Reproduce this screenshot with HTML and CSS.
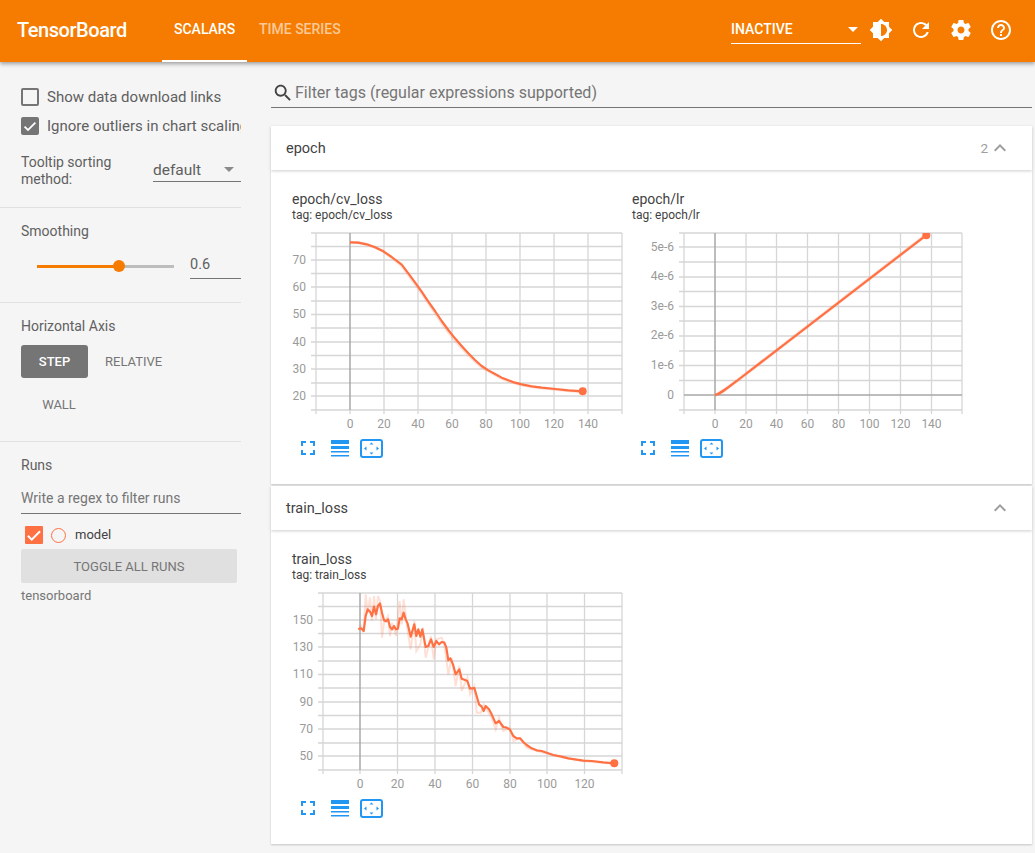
FILE: index.html
```html
<!DOCTYPE html>
<html lang="en">
<head>
<meta charset="utf-8">
<title>TensorBoard</title>
<link rel="stylesheet" href="styles.css">
</head>
<body>
<header class="topbar">
  <div class="brand">TensorBoard</div>
  <nav class="tabs">
    <a class="tab tab-active">SCALARS</a>
    <a class="tab">TIME SERIES</a>
  </nav>
  <div class="topbar-right">
    <div class="plugin-select"><span>INACTIVE</span><i class="caret caret-white"></i></div>
    <div class="top-icons">
      <svg class="top-icon" viewBox="0 0 24 24"><path d="M20 15.31L23.31 12 20 8.69V4h-4.69L12 .69 8.69 4H4v4.69L.69 12 4 15.31V20h4.69L12 23.31 15.31 20H20v-4.69zM12 18V6c3.31 0 6 2.69 6 6s-2.69 6-6 6z"/></svg>
      <svg class="top-icon" viewBox="0 0 24 24"><path d="M17.65 6.35C16.2 4.9 14.21 4 12 4c-4.42 0-7.99 3.58-7.99 8s3.57 8 7.99 8c3.73 0 6.84-2.55 7.73-6h-2.08c-.82 2.33-3.04 4-5.65 4-3.31 0-6-2.69-6-6s2.69-6 6-6c1.66 0 3.14.69 4.22 1.78L13 11h7V4l-2.35 2.35z"/></svg>
      <svg class="top-icon" viewBox="0 0 24 24"><path d="M19.43 12.98c.04-.32.07-.64.07-.98s-.03-.66-.07-.98l2.11-1.65c.19-.15.24-.42.12-.64l-2-3.46c-.12-.22-.39-.3-.61-.22l-2.49 1c-.52-.4-1.08-.73-1.69-.98l-.38-2.65C14.46 2.18 14.25 2 14 2h-4c-.25 0-.46.18-.49.42l-.38 2.65c-.61.25-1.17.59-1.69.98l-2.49-1c-.23-.09-.49 0-.61.22l-2 3.46c-.13.22-.07.49.12.64l2.11 1.65c-.04.32-.07.65-.07.98s.03.66.07.98l-2.11 1.65c-.19.15-.24.42-.12.64l2 3.46c.12.22.39.3.61.22l2.49-1c.52.4 1.08.73 1.69.98l.38 2.65c.03.24.24.42.49.42h4c.25 0 .46-.18.49-.42l.38-2.65c.61-.25 1.17-.59 1.69-.98l2.49 1c.23.09.49 0 .61-.22l2-3.46c.12-.22.07-.49-.12-.64l-2.11-1.65zM12 15.5c-1.93 0-3.5-1.57-3.5-3.5s1.57-3.5 3.5-3.5 3.5 1.57 3.5 3.5-1.57 3.5-3.5 3.5z"/></svg>
      <svg class="top-icon" viewBox="0 0 24 24"><path d="M11 18h2v-2h-2v2zm1-16C6.48 2 2 6.48 2 12s4.48 10 10 10 10-4.48 10-10S17.52 2 12 2zm0 18c-4.41 0-8-3.59-8-8s3.59-8 8-8 8 3.59 8 8-3.59 8-8 8zm0-14c-2.21 0-4 1.79-4 4h2c0-1.1.9-2 2-2s2 .9 2 2c0 2-3 1.75-3 5h2c0-2.25 3-2.5 3-5 0-2.21-1.79-4-4-4z"/></svg>
    </div>
  </div>
</header>

<div class="page">
  <aside class="sidebar">
    <section class="side-section section-options">
      <div class="check-row">
        <span class="checkbox"></span><span class="check-label">Show data download links</span>
      </div>
      <div class="check-row">
        <span class="checkbox checkbox-on"><svg viewBox="0 0 24 24"><path d="M9 16.2L4.8 12l-1.9 1.9L9 20 21 8l-1.9-1.9z"/></svg></span><span class="check-label">Ignore outliers in chart scaling</span>
      </div>
      <div class="tooltip-row">
        <div class="tooltip-label">Tooltip sorting method:</div>
        <div class="dropdown"><span>default</span><i class="caret caret-grey"></i></div>
      </div>
    </section>

    <section class="side-section section-smoothing">
      <div class="side-title">Smoothing</div>
      <div class="slider-row">
        <div class="slider"><div class="slider-fill"></div><div class="slider-thumb"></div></div>
        <div class="slider-value">0.6</div>
      </div>
    </section>

    <section class="side-section section-axis">
      <div class="side-title">Horizontal Axis</div>
      <div class="axis-buttons">
        <button class="axis-btn axis-btn-on">STEP</button>
        <button class="axis-btn">RELATIVE</button>
        <button class="axis-btn">WALL</button>
      </div>
    </section>

    <section class="section-runs">
      <div class="side-title">Runs</div>
      <div class="runs-filter">Write a regex to filter runs</div>
      <div class="run-row">
        <span class="run-check"><svg viewBox="0 0 24 24"><path d="M9 16.2L4.8 12l-1.9 1.9L9 20 21 8l-1.9-1.9z"/></svg></span>
        <span class="run-radio"></span>
        <span class="run-name">model</span>
      </div>
      <button class="toggle-runs">TOGGLE ALL RUNS</button>
      <div class="run-dir">tensorboard</div>
    </section>
  </aside>

  <main class="main">
    <div class="filter-bar">
      <svg class="search-icon" viewBox="0 0 24 24"><path d="M15.5 14h-.79l-.28-.27C15.41 12.59 16 11.11 16 9.5 16 5.91 13.09 3 9.5 3S3 5.91 3 9.5 5.91 16 9.5 16c1.61 0 3.09-.59 4.23-1.57l.27.28v.79l5 4.99L20.49 19l-4.99-5zm-6 0C7.01 14 5 11.99 5 9.5S7.01 5 9.5 5 14 7.01 14 9.5 11.99 14 9.5 14z"/></svg>
      <span>Filter tags (regular expressions supported)</span>
    </div>

    <section class="group">
      <div class="group-head">
        <span class="group-name">epoch</span>
        <span class="group-count">2</span>
        <svg class="chevron" viewBox="0 0 24 24"><path d="M12 8l-6 6 1.41 1.41L12 10.83l4.59 4.58L18 14z"/></svg>
      </div>
      <div class="group-body">
        <article class="chart">
          <div class="chart-title">epoch/cv_loss</div>
          <div class="chart-tag">tag: epoch/cv_loss</div>
          <svg class="plot" viewBox="292 225 340 205">
            <path class="grid" d="M316 232V413M384 232V409M418 232V409M452 232V409M486 232V409M520 232V409M554 232V409M588 232V409M622 232V413M311 232H622M311 245.500H622M311 259H622M311 272.500H622M311 286H622M311 300H622M311 313.500H622M311 327H622M311 341H622M311 354.500H622M311 368H622M311 382H622M311 395H622M311 409H622M350 409V413M384 409V413M418 409V413M452 409V413M486 409V413M520 409V413M554 409V413M588 409V413"/>
            <path class="zero" d="M350 232V409"/>
            <polyline class="raw raw-thick" transform="translate(275 180) scale(.33333)" points="225,184 250,185 275,190 300,199 325,211 350,230 380,254 400,281 420,309 440,336 460,366 480,396 500,426 520,453 540,478 560,501 580,522 600,541 620,558 640,570 660,581 680,592 700,600 720,606 740,611 770,617 800,621 840,625 880,629 923,632"/>
            <polyline class="line line-thick" transform="translate(275 180) scale(.33333)" points="225,184 250,185 275,190 300,199 325,211 350,228 380,251 400,277 420,304 440,332 460,362 480,390 500,420 520,447 540,472 560,495 580,517 600,537 620,555 640,568 660,579 680,590 700,598 720,605 740,610 770,616 800,620 840,624 880,628 923,631"/>
            <circle class="dot" cx="582.700" cy="390.300" r="4"/>
            <g class="ticks-y">
              <text x="306" y="262.500">70</text><text x="306" y="289.500">60</text><text x="306" y="317">50</text><text x="306" y="344.500">40</text><text x="306" y="371.500">30</text><text x="306" y="398.500">20</text>
            </g>
            <g class="ticks-x">
              <text x="350" y="427">0</text><text x="384" y="427">20</text><text x="418" y="427">40</text><text x="452" y="427">60</text><text x="486" y="427">80</text><text x="520" y="427">100</text><text x="554" y="427">120</text><text x="588" y="427">140</text>
            </g>
          </svg>
          <div class="chart-tools">
            <svg class="tool tool-full" viewBox="0 0 24 24"><path d="M7 14H5v5h5v-2H7v-3zm-2-4h2V7h3V5H5v5zm12 7h-3v2h5v-5h-2v3zM14 5v2h3v3h2V5h-5z"/></svg>
            <svg class="tool tool-lines" viewBox="0 0 18 17"><path d="M0 0h18v4H0zM0 6h18v3H0zM0 11h18v1.500H0zM0 15h18v1.500H0z"/></svg>
            <svg class="tool tool-fit" viewBox="0 0 23 19"><rect class="fit-frame" x="1" y="1" width="21" height="17" rx="2"/><path d="M4 9.500l2.500-2v4zM19 9.500l-2.500-2v4zM11.500 3.500l2 2h-4zM11.500 15.500l2-2h-4z"/></svg>
          </div>
        </article>

        <article class="chart">
          <div class="chart-title">epoch/lr</div>
          <div class="chart-tag">tag: epoch/lr</div>
          <svg class="plot" viewBox="632 225 340 205">
            <defs><clipPath id="clip-lr"><rect x="684" y="232" width="290" height="180"/></clipPath></defs>
            <path class="grid" d="M684 232V413M746 232V409M776.500 232V409M807.500 232V409M838.500 232V409M869.500 232V409M900.500 232V409M931.500 232V409M962 232V413M679 232H962M679 246H962M679 261H962M679 276H962M679 290.500H962M679 305.500H962M679 320H962M679 335H962M679 350H962M679 364.500H962M679 379.500H962M679 409H962M715 409V413M746 409V413M776.500 409V413M807.500 409V413M838.500 409V413M869.500 409V413M900.500 409V413M931.500 409V413"/>
            <path class="zero" d="M715 232V409M684 394H962"/>
            <g clip-path="url(#clip-lr)">
              <path class="raw" d="M715 394C720 393 725 389 738 379L926 234"/>
              <path class="line" d="M715 394C720 393 725 389 738 379L926 234.300"/>
              <circle class="dot" cx="926.300" cy="234.300" r="4"/>
            </g>
            <g class="ticks-y">
              <text x="674" y="249.500">5e-6</text><text x="674" y="279">4e-6</text><text x="674" y="308.500">3e-6</text><text x="674" y="338">2e-6</text><text x="674" y="367.500">1e-6</text><text x="674" y="397.500">0</text>
            </g>
            <g class="ticks-x">
              <text x="715" y="427">0</text><text x="746" y="427">20</text><text x="776.500" y="427">40</text><text x="807.500" y="427">60</text><text x="838.500" y="427">80</text><text x="869.500" y="427">100</text><text x="900.500" y="427">120</text><text x="931.500" y="427">140</text>
            </g>
          </svg>
          <div class="chart-tools">
            <svg class="tool tool-full" viewBox="0 0 24 24"><path d="M7 14H5v5h5v-2H7v-3zm-2-4h2V7h3V5H5v5zm12 7h-3v2h5v-5h-2v3zM14 5v2h3v3h2V5h-5z"/></svg>
            <svg class="tool tool-lines" viewBox="0 0 18 17"><path d="M0 0h18v4H0zM0 6h18v3H0zM0 11h18v1.500H0zM0 15h18v1.500H0z"/></svg>
            <svg class="tool tool-fit" viewBox="0 0 23 19"><rect class="fit-frame" x="1" y="1" width="21" height="17" rx="2"/><path d="M4 9.500l2.500-2v4zM19 9.500l-2.500-2v4zM11.500 3.500l2 2h-4zM11.500 15.500l2-2h-4z"/></svg>
          </div>
        </article>
      </div>
    </section>

    <section class="group">
      <div class="group-head">
        <span class="group-name">train_loss</span>
        <svg class="chevron" viewBox="0 0 24 24"><path d="M12 8l-6 6 1.41 1.41L12 10.83l4.59 4.58L18 14z"/></svg>
      </div>
      <div class="group-body">
        <article class="chart">
          <div class="chart-title">train_loss</div>
          <div class="chart-tag">tag: train_loss</div>
          <svg class="plot" viewBox="292 585 340 205">
            <defs><clipPath id="clip-train"><rect x="323" y="592" width="299" height="180"/></clipPath></defs>
            <path class="grid" d="M323 592V773M397.500 592V769M435 592V769M472.500 592V769M510 592V769M547 592V769M584.500 592V769M622 592V773M318 592H622M318 605.500H622M318 619H622M318 632.500H622M318 646H622M318 660H622M318 673.500H622M318 687H622M318 701H622M318 714.500H622M318 728H622M318 742H622M318 755H622M318 769H622M360 769V773M397.500 769V773M435 769V773M472.500 769V773M510 769V773M547 769V773M584.500 769V773"/>
            <path class="zero" d="M360 592V769"/>
            <g clip-path="url(#clip-train)">
              <polyline class="raw raw-train" transform="translate(275 540) scale(.33333)" points="250,265 258,255 266,272 272,160 278,215 285,170 291,240 297,165 303,235 309,165 315,180 321,290 327,245 339,225 345,285 351,245 363,285 374,180 380,250 386,175 398,270 407,325 418,240 424,330 436,310 444,260 452,350 468,285 476,355 484,295 500,290 508,310 520,400 530,350 542,435 553,375 560,450 577,410 585,460 598,435 605,515 618,515 626,490 650,530 662,565 672,530 685,570 705,560 715,600 735,590 755,620 770,625 785,630 815,637 860,649 925,661 1018,668"/>
              <polyline class="line line-thick" transform="translate(275 540) scale(.33333)" points="250,265 258,262 266,270 272,225 278,205 285,212 291,225 297,197 303,220 309,195 315,187 321,215 327,238 333,241 339,235 345,258 351,265 357,255 363,265 369,263 374,232 380,235 386,215 392,235 398,248 407,287 418,250 424,285 430,265 436,287 442,265 452,318 460,315 468,295 476,318 484,300 492,310 500,303 508,305 514,320 520,358 526,352 534,370 542,400 553,385 560,413 570,417 577,420 585,443 598,441 605,465 612,490 620,497 626,510 632,495 642,505 650,520 662,547 672,540 685,558 695,560 705,566 715,585 725,592 735,592 745,603 755,612 770,622 785,628 800,630 815,635 835,642 860,647 880,652 900,655 925,659 950,660 985,664 1018,667"/>
              <circle class="dot" cx="614.300" cy="762.300" r="4"/>
            </g>
            <g class="ticks-y">
              <text x="313" y="622.500">150</text><text x="313" y="649.500">130</text><text x="313" y="677">110</text><text x="313" y="704.500">90</text><text x="313" y="731.500">70</text><text x="313" y="758.500">50</text>
            </g>
            <g class="ticks-x">
              <text x="360" y="787">0</text><text x="397.500" y="787">20</text><text x="435" y="787">40</text><text x="472.500" y="787">60</text><text x="510" y="787">80</text><text x="547" y="787">100</text><text x="584.500" y="787">120</text>
            </g>
          </svg>
          <div class="chart-tools">
            <svg class="tool tool-full" viewBox="0 0 24 24"><path d="M7 14H5v5h5v-2H7v-3zm-2-4h2V7h3V5H5v5zm12 7h-3v2h5v-5h-2v3zM14 5v2h3v3h2V5h-5z"/></svg>
            <svg class="tool tool-lines" viewBox="0 0 18 17"><path d="M0 0h18v4H0zM0 6h18v3H0zM0 11h18v1.500H0zM0 15h18v1.500H0z"/></svg>
            <svg class="tool tool-fit" viewBox="0 0 23 19"><rect class="fit-frame" x="1" y="1" width="21" height="17" rx="2"/><path d="M4 9.500l2.500-2v4zM19 9.500l-2.500-2v4zM11.500 3.500l2 2h-4zM11.500 15.500l2-2h-4z"/></svg>
          </div>
        </article>
      </div>
    </section>
  </main>
</div>
</body>
</html>
```

FILE: styles.css
```css
* { box-sizing: border-box; }
html, body { height: 100%; }
body {
  margin: 0;
  background: #f5f5f5;
  font-family: Roboto, "Liberation Sans", sans-serif;
  color: #424242;
  overflow: hidden;
}

/* Top bar */
.topbar {
  height: 62px;
  background: #f57c00;
  color: #fff;
  display: flex;
  align-items: stretch;
  padding-left: 17px;
  box-shadow: 0 2px 4px rgba(0, 0, 0, .35);
  position: relative;
  z-index: 2;
}
.brand {
  font-size: 20px;
  font-weight: 500;
  line-height: 60px;
  width: 145px;
  letter-spacing: -.45px;
}
.tabs { display: flex; }
.tab {
  font-size: 14px;
  font-weight: 500;
  padding: 0 12px;
  line-height: 58px;
  color: rgba(255, 255, 255, .6);
}
.tab-active {
  color: #fff;
  width: 85px;
  border-bottom: 2px solid #fff;
}
.topbar-right {
  margin-left: auto;
  display: flex;
  align-items: flex-start;
}
.plugin-select {
  width: 130px;
  height: 44px;
  border-bottom: 1px solid #fff;
  display: flex;
  justify-content: space-between;
  align-items: center;
  font-size: 14px;
  font-weight: 500;
  padding: 15px 3px 0 0;
}
.caret {
  width: 0;
  height: 0;
  border-left: 5px solid transparent;
  border-right: 5px solid transparent;
  border-top: 5px solid;
}
.caret-white { color: #fff; }
.caret-grey { color: #8a8a8a; }
.top-icons {
  display: flex;
  gap: 16px;
  margin: 18px 22px 0 8px;
}
.top-icon { width: 24px; height: 24px; fill: #fff; display: block; }

/* Layout */
.page { display: flex; align-items: flex-start; }
.sidebar { width: 241px; flex: none; }
.main { width: 761px; margin-left: 30px; }

/* Sidebar */
.side-section { border-bottom: 1px solid #e0e0e0; }
.section-options { height: 146px; padding: 26px 0 0 21px; }
.section-smoothing { height: 95px; padding: 15px 0 0 21px; }
.section-axis { height: 139px; padding: 15px 0 0 21px; }
.section-runs { padding: 15px 0 0 21px; }
.side-title { font-size: 14px; line-height: 16px; color: #616161; }
.check-row {
  display: flex;
  align-items: center;
  height: 18px;
  margin-bottom: 11px;
  overflow: hidden;
  white-space: nowrap;
}
.checkbox {
  flex: none;
  width: 18px;
  height: 18px;
  border: 2px solid #757575;
  border-radius: 2px;
  margin-right: 8px;
}
.checkbox svg { display: block; width: 16px; height: 16px; margin: -1px; fill: #fff; }
.checkbox-on { background: #757575; }
.check-label { font-size: 15px; color: #5f5f5f; }
.tooltip-row { display: flex; margin-top: 16px; }
.tooltip-label { width: 132px; font-size: 14px; line-height: 17px; color: #5f5f5f; padding-top: 3px; }
.dropdown {
  width: 88px;
  height: 30px;
  margin-top: 1px;
  border-bottom: 1px solid #757575;
  font-size: 15.500px;
  color: #5f5f5f;
  display: flex;
  justify-content: space-between;
  align-items: center;
  padding: 6px 7px 0 0;
}
.slider-row { display: flex; align-items: flex-start; margin-top: 15px; padding-left: 16px; }
.slider {
  position: relative;
  width: 137px;
  height: 3px;
  margin-top: 11px;
  background: #bdbdbd;
}
.slider-fill { width: 82px; height: 3px; background: #f57c00; }
.slider-thumb {
  position: absolute;
  left: 76px;
  top: -5px;
  width: 12px;
  height: 12px;
  border-radius: 50%;
  background: #f57c00;
}
.slider-value {
  width: 51px;
  height: 25px;
  margin-left: 16px;
  border-bottom: 1px solid #757575;
  font-size: 14.500px;
  line-height: 22px;
  color: #5f5f5f;
}
.axis-buttons { display: flex; flex-wrap: wrap; row-gap: 10px; margin-top: 11px; }
.axis-btn {
  height: 33px;
  padding: 0 17px;
  border: 0;
  border-radius: 3px;
  background: none;
  font: 400 13px Roboto, "Liberation Sans", sans-serif;
  color: #757575;
}
.axis-btn:first-child { width: 67px; padding: 0; }
.axis-btn:last-child { width: 76px; padding: 0; text-align: center; }
.axis-btn-on { background: #757575; color: #fff; font-weight: 500; }
.runs-filter {
  margin-top: 16px;
  height: 25px;
  font-size: 14px;
  line-height: 18px;
  color: #757575;
  border-bottom: 1px solid #757575;
}
.run-row { display: flex; align-items: center; margin: 12px 0 0 4px; height: 18px; }
.run-check { width: 18px; height: 18px; background: #ff7043; border-radius: 1px; }
.run-check svg { display: block; width: 18px; height: 18px; fill: #fff; }
.run-radio { width: 15px; height: 15px; margin-left: 8px; border: 1.500px solid #ff7043; border-radius: 50%; }
.run-name { margin-left: 9px; font-size: 13px; color: #424242; margin-top: -1px; }
.toggle-runs {
  display: block;
  width: 216px;
  height: 34px;
  margin-top: 5px;
  border: 0;
  border-radius: 2px;
  background: #e0e0e0;
  color: #757575;
  font: 400 13px Roboto, "Liberation Sans", sans-serif;
}
.run-dir { margin-top: 5px; font-size: 13px; line-height: 15px; color: #757575; }

/* Main */
.filter-bar {
  height: 30px;
  margin-top: 16px;
  border-bottom: 1px solid #757575;
  display: flex;
  align-items: flex-start;
  font-size: 16px;
  line-height: 30px;
  color: #757575;
}
.search-icon { width: 22px; height: 22px; margin: 4px 1px 0 1px; fill: #424242; flex: none; }
.filter-bar span { line-height: 29px; }
.group { margin-top: 18px; }
.group + .group { margin-top: 2px; }
.group-head {
  height: 44px;
  background: #fff;
  box-shadow: 0 1px 3px rgba(0, 0, 0, .2);
  display: flex;
  align-items: center;
  padding: 0 20px 0 15px;
  position: relative;
}
.group-name { font-size: 14.500px; color: #424242; }
.group-count { margin-left: auto; font-size: 13.500px; color: #9e9e9e; }
.chevron { width: 24px; height: 24px; fill: #9e9e9e; flex: none; }
.group-name + .chevron { margin-left: auto; }
.group-body {
  height: 314px;
  background: #fff;
  box-shadow: 0 1px 2px rgba(0, 0, 0, .2);
  display: flex;
  padding: 21px 0 0 21px;
}
.chart { width: 340px; flex: none; }
.chart-title { font-size: 14px; line-height: 16px; color: #424242; }
.chart-tag { font-size: 12px; line-height: 12px; color: #424242; margin-top: 2px; }
.plot { display: block; width: 340px; height: 205px; margin-top: 5px; }
.grid { fill: none; stroke: #d6d6d6; stroke-width: 1.300; }
.zero { fill: none; stroke: #a8a8a8; stroke-width: 1.500; }
.raw { fill: none; stroke: #ff7043; stroke-opacity: .2; stroke-width: 3.500; }
.raw-thick { stroke-width: 9; }
.raw-train { stroke-width: 6; stroke-opacity: .22; }
.line { fill: none; stroke: #ff7043; stroke-width: 2.200; }
.line-thick { stroke-width: 6.500; stroke-linejoin: round; }
.dot { fill: #ff7043; }
.ticks-y text, .ticks-x text {
  font-family: Roboto, "Liberation Sans", sans-serif;
  font-size: 12px;
  fill: #9a9a9a;
}
.ticks-y text { text-anchor: end; }
.ticks-x text { text-anchor: middle; }
.chart-tools { display: flex; align-items: flex-start; margin-top: 5px; padding-left: 4px; }
.tool { fill: #2196f3; flex: none; display: block; }
.tool-full { width: 24px; height: 24px; }
.tool-lines { width: 18px; height: 17px; margin: 4px 0 0 11px; }
.tool-fit { width: 23px; height: 19px; margin: 3px 0 0 11px; }
.fit-frame { fill: none; stroke: #2196f3; stroke-width: 2; }
```
